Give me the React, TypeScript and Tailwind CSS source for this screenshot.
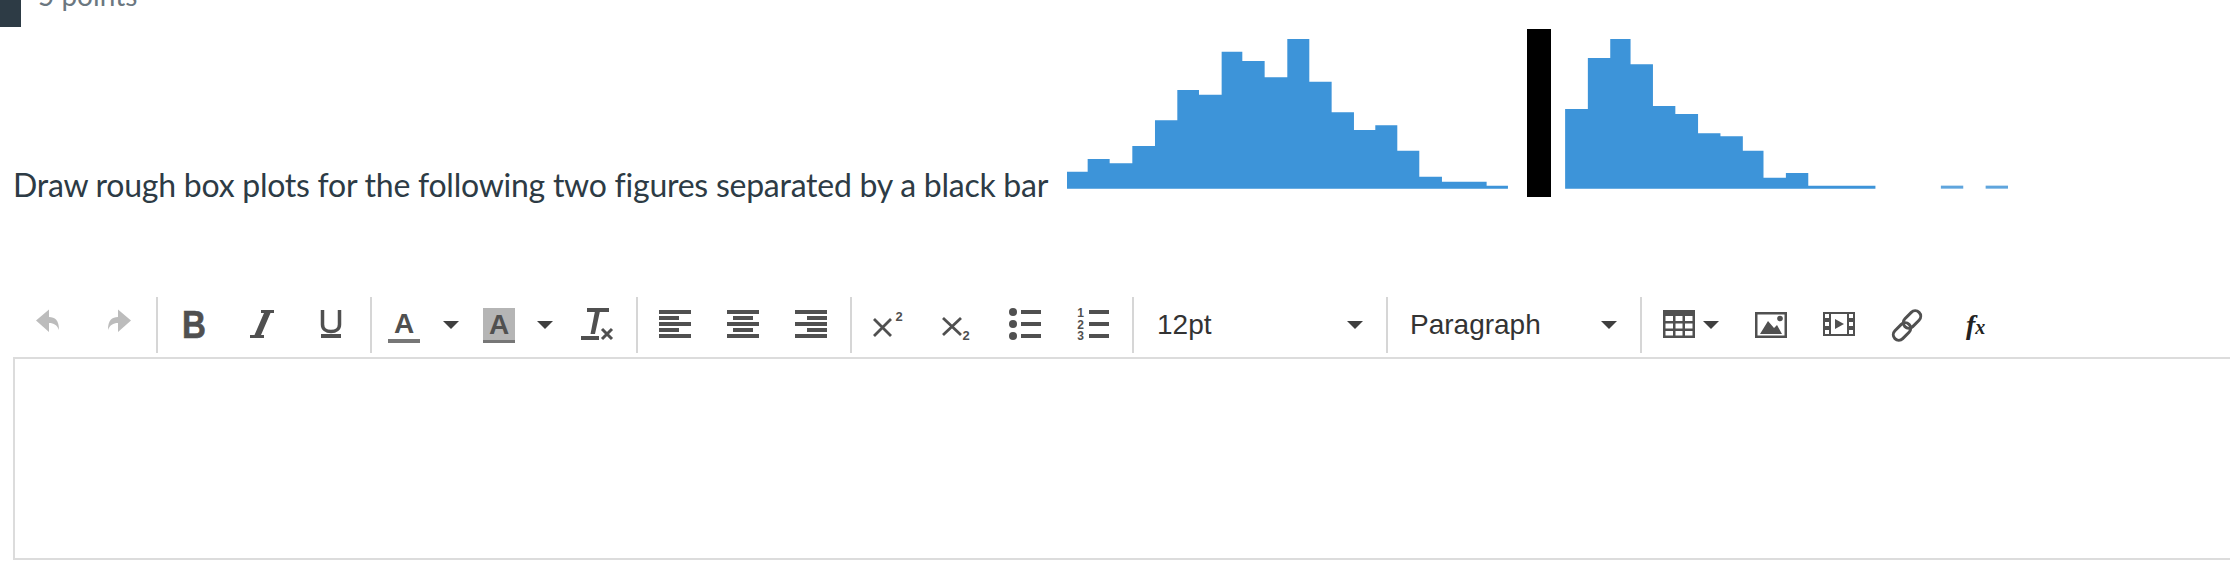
import type { ReactNode } from 'react';

// [left, right, top] per bin, measured off the figure
const leftBins = [
  [84, 146, 455], [146, 212, 417], [212, 280, 430], [280, 348, 378], [348, 415, 301],
  [415, 480, 210], [480, 548, 224], [548, 610, 95], [610, 677, 123], [677, 745, 172],
  [745, 811, 57], [811, 878, 185], [878, 945, 277], [945, 1009, 330], [1009, 1075, 316],
  [1075, 1141, 392], [1141, 1209, 470], [1209, 1343, 485], [1343, 1407, 497],
];

const rightBins = [
  [192, 258, 267], [258, 323, 114], [323, 382, 57], [382, 447, 133], [447, 512, 258],
  [512, 578, 282], [578, 643, 340], [643, 708, 349], [708, 768, 392], [768, 833, 473],
  [833, 898, 459], [898, 1093, 497],
];

const toPath = (bins: number[][]) =>
  `M${bins[0][0]} 506 ` + bins.map(([a, b, t]) => `L${a} ${t} L${b} ${t}`).join(' ') + ` L${bins[bins.length - 1][1]} 506Z`;

const Caret = () => (
  <svg width="16" height="8" viewBox="0 0 16 8" className="shrink-0">
    <path d="M0 0H16L8 8Z" fill="#3f3f3f" />
  </svg>
);

const Icon = ({ children }: { children: ReactNode }) => (
  <svg width="32" height="34" viewBox="0 0 32 34" fill="#505050" className="shrink-0 overflow-visible">
    {children}
  </svg>
);

const Btn = ({ w, children }: { w: string; children: ReactNode }) => (
  <button className={`flex h-full items-center justify-center ${w}`}>{children}</button>
);

const Sep = ({ className = '' }: { className?: string }) => <div className={`h-[56px] w-[2px] shrink-0 bg-[#d6d6d6] ${className}`} />;

const Histograms = () => (
  <svg width="941" height="168" viewBox="0 0 941 168" className="ml-[12px] inline-block align-baseline">
    <g transform="translate(-28 -9) scale(0.3333)" fill="#3d94d9">
      <path d={toPath(leftBins)} />
    </g>
    <rect x="460" y="0" width="24" height="168" fill="#000" />
    <g transform="translate(432 -9) scale(0.3444 0.3333)" fill="#3d94d9">
      <path d={toPath(rightBins)} />
      <rect x="1283" y="497" width="65" height="9" fill="#5fa5dd" />
      <rect x="1413" y="497" width="65" height="9" fill="#5fa5dd" />
    </g>
  </svg>
);

const AlignIcon = ({ kind }: { kind: 'left' | 'center' | 'right' }) => {
  const shortX = kind === 'left' ? 0 : kind === 'center' ? 6 : 12;
  return (
    <Icon>
      <rect x="0" y="2" width="32" height="4" />
      <rect x={shortX} y="8" width="20" height="4" />
      <rect x="0" y="14" width="32" height="4" />
      <rect x={shortX} y="20" width="20" height="4" />
      <rect x="0" y="26" width="32" height="4" />
    </Icon>
  );
};

export default function App() {
  return (
    <div className="h-[581px] w-full overflow-hidden bg-white text-[#2d3b45] [font-family:Lato,sans-serif]">
      <div className="flex h-[27px]">
        <div className="h-full w-[21px] bg-[#2d3b45]" />
        <div className="-mt-[25px] ml-[17px] text-[28px] leading-[40px] text-[#6b7780]">5 points</div>
      </div>

      <p className="mt-[2px] whitespace-nowrap pl-[13px] text-[32px] leading-[40px] tracking-[-0.25px]">
        Draw rough box plots for the following two figures separated by a black bar <Histograms />
      </p>

      <div className="mt-[92px] flex h-[56px] items-center pl-[13px]">
        <Btn w="w-[68px]">
          <Icon>
            <path d="M5 12.5 18 1.5V9C24 9 28 12 28 22 26 17 23 15 18 15V24Z" fill="#bcbcbc" />
          </Icon>
        </Btn>
        <Btn w="w-[68px] ml-[5px]">
          <Icon>
            <path d="M27 12.5 14 1.5V9C8 9 4 12 4 22 6 17 9 15 14 15V24Z" fill="#bcbcbc" />
          </Icon>
        </Btn>
        <Sep className="ml-[2px]" />

        <Btn w="w-[68px] ml-[2px]">
          <Icon>
            <text transform="translate(16 30) scale(0.85 1)" textAnchor="middle" fontSize="39" fontWeight="700" fontFamily="Liberation Sans" stroke="#505050" strokeWidth="0.6">B</text>
          </Icon>
        </Btn>
        <Btn w="w-[68px]">
          <Icon>
            <path d="M15 2H28V5H24.5L15 27H18V30H4V27H8.5L18 5H15Z" />
          </Icon>
        </Btn>
        <Btn w="w-[68px]">
          <Icon>
            <path d="M8.5 2V16.5C8.5 21 12 23.5 17 23.5S25.5 21 25.5 16.5V2" fill="none" stroke="#505050" strokeWidth="3.5" />
            <rect x="7" y="26" width="20" height="4" />
          </Icon>
        </Btn>
        <Sep className="ml-[6px]" />

        <Btn w="w-[64px]">
          <div className="relative flex h-[36px] w-[32px] flex-col items-center">
            <span className="mt-[-1px] text-[28px] font-bold leading-[36px] text-[#505050] [font-family:'Liberation_Sans',sans-serif]">A</span>
            <span className="absolute bottom-0 left-0 h-[4px] w-[32px] bg-[#777]" />
          </div>
        </Btn>
        <Btn w="w-[30px]"><Caret /></Btn>
        <Btn w="w-[66px]">
          <div className="relative flex h-[35px] w-[32px] flex-col items-center bg-[#b5b5b5]">
            <span className="text-[28px] font-bold leading-[33px] text-[#505050] [font-family:'Liberation_Sans',sans-serif]">A</span>
            <span className="absolute bottom-0 left-0 h-[3px] w-[32px] bg-[#777]" />
          </div>
        </Btn>
        <Btn w="w-[26px]"><Caret /></Btn>
        <Btn w="w-[78px]">
          <Icon>
            <rect x="6" y="0" width="22" height="4" />
            <path d="M14 3H19L14 26H9.5Z" />
            <rect x="0" y="28" width="18" height="4" />
            <path d="M21 21 31 31M31 21 21 31" stroke="#505050" strokeWidth="3" fill="none" />
          </Icon>
        </Btn>
        <Sep />

        <Btn w="w-[68px] ml-[3px]"><AlignIcon kind="left" /></Btn>
        <Btn w="w-[68px]"><AlignIcon kind="center" /></Btn>
        <Btn w="w-[68px]"><AlignIcon kind="right" /></Btn>
        <Sep className="ml-[5px]" />

        <Btn w="w-[68px] ml-[1px]">
          <Icon>
            <path d="M3 11 20 28M20 11 3 28" stroke="#505050" strokeWidth="2.8" fill="none" />
            <text x="28" y="13" textAnchor="middle" fontSize="13" fontWeight="700" fontFamily="Liberation Sans">2</text>
          </Icon>
        </Btn>
        <Btn w="w-[68px]">
          <Icon>
            <path d="M4 10 22 27M22 10 4 27" stroke="#505050" strokeWidth="2.8" fill="none" />
            <text x="27" y="32" textAnchor="middle" fontSize="13" fontWeight="700" fontFamily="Liberation Sans">2</text>
          </Icon>
        </Btn>
        <Btn w="w-[68px] ml-[2px]">
          <Icon>
            <circle cx="4" cy="4" r="4" />
            <circle cx="4" cy="16" r="4" />
            <circle cx="4" cy="28" r="4" />
            <rect x="12" y="2" width="20" height="4" />
            <rect x="12" y="14" width="20" height="4" />
            <rect x="12" y="26" width="20" height="4" />
          </Icon>
        </Btn>
        <Btn w="w-[68px]">
          <Icon>
            <text x="3.5" y="9" textAnchor="middle" fontSize="12" fontWeight="700" fontFamily="Liberation Sans">1</text>
            <text x="3.5" y="21" textAnchor="middle" fontSize="12" fontWeight="700" fontFamily="Liberation Sans">2</text>
            <text x="3.5" y="32" textAnchor="middle" fontSize="12" fontWeight="700" fontFamily="Liberation Sans">3</text>
            <rect x="12" y="2" width="20" height="4" />
            <rect x="12" y="14" width="20" height="4" />
            <rect x="12" y="26" width="20" height="4" />
          </Icon>
        </Btn>
        <Sep className="ml-[5px]" />

        <button className="flex h-full w-[252px] items-center justify-between pl-[23px] pr-[23px] text-[28px] text-[#333] [font-family:'Liberation_Sans',sans-serif]">
          <span>12pt</span>
          <Caret />
        </button>
        <Sep />
        <button className="flex h-full w-[252px] items-center justify-between pl-[22px] pr-[23px] text-[28px] text-[#333] [font-family:'Liberation_Sans',sans-serif]">
          <span>Paragraph</span>
          <Caret />
        </button>
        <Sep />

        <Btn w="w-[32px] ml-[21px]">
          <Icon>
            <path fillRule="evenodd" d="M0 2H32V30H0ZM2.5 8V13H10V8ZM12.5 8V13H19.5V8ZM22 8V13H29.5V8ZM2.5 15.5V20.5H10V15.5ZM12.5 15.5V20.5H19.5V15.5ZM22 15.5V20.5H29.5V15.5ZM2.5 23V27.5H10V23ZM12.5 23V27.5H19.5V23ZM22 23V27.5H29.5V23Z" />
          </Icon>
        </Btn>
        <Btn w="w-[16px] ml-[8px]"><Caret /></Btn>
        <Btn w="w-[32px] ml-[36px]">
          <Icon>
            <path fillRule="evenodd" d="M0 4H32V30H0ZM2.5 6.5V27.5H29.5V6.5Z" />
            <path d="M5 26 13 13 19 20 22 17 27 26Z" />
            <circle cx="25" cy="10.5" r="2.8" />
          </Icon>
        </Btn>
        <Btn w="w-[32px] ml-[36px]">
          <Icon>
            <path fillRule="evenodd" d="M0 4H32V28H0ZM2 6V10H6V6ZM2 14V18H6V14ZM2 22V26H6V22ZM26 6V10H30V6ZM26 14V18H30V14ZM26 22V26H30V22ZM8 6V26H24V6Z" />
            <path d="M12 11 21 16 12 21Z" />
          </Icon>
        </Btn>
        <Btn w="w-[32px] ml-[36px]">
          <Icon>
            <g fill="none" stroke="#505050" strokeWidth="3">
              <rect x="1" y="18" width="20" height="11" rx="5.5" transform="rotate(-45 11 23.5)" />
              <rect x="11" y="6" width="20" height="11" rx="5.5" transform="rotate(-45 21 11.5)" />
            </g>
          </Icon>
        </Btn>
        <div className="ml-[43px] whitespace-nowrap text-[28px] font-bold italic leading-none text-[#222] [font-family:'Liberation_Serif',serif]">
          f<span className="text-[20px]">x</span>
        </div>
      </div>

      <div className="ml-[13px] mt-[4px] h-[203px] border-2 border-r-0 border-[#dcdcdc]" />
    </div>
  );
}
